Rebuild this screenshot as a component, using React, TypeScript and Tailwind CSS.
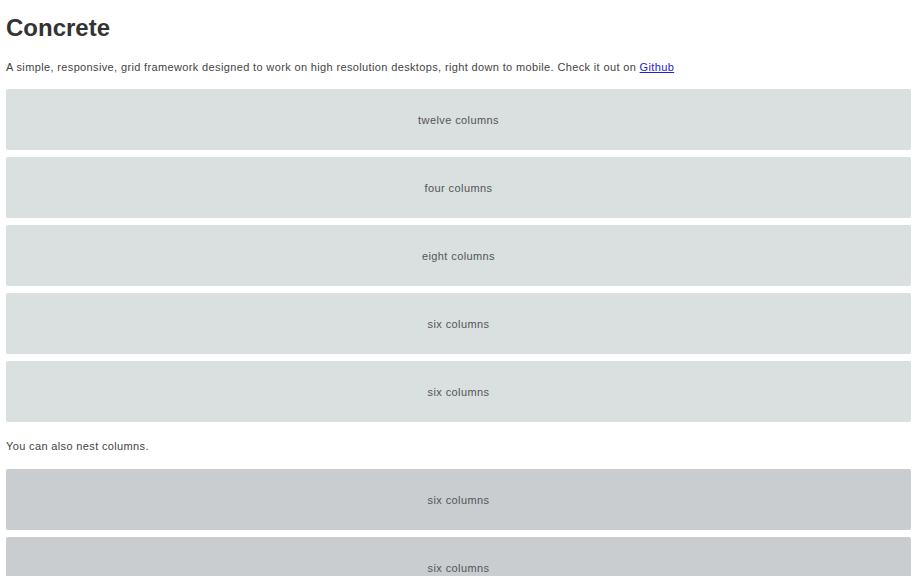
import React from "react";

const Box = ({ label, dark }: { label: string; dark?: boolean }) => (
  <div
    className={`h-[61px] rounded-[2px] flex items-center justify-center pt-[2px] text-[11px] tracking-[0.4px] text-[#555] ${dark ? "bg-[#c9cdcf]" : "bg-[#dadfe0]"}`}
  >
    {label}
  </div>
);

export default function App() {
  return (
    <div className="bg-white min-h-[576px] pl-[6px] pr-[5px] pt-[14px] font-['Liberation_Sans',Arial,sans-serif] text-[#333]">
      <h1 className="text-[24px] leading-[28px] font-bold text-[#333]">Concrete</h1>
      <p className="mt-[18px] text-[11px] leading-[14px] tracking-[0.36px] text-[#444]">
        A simple, responsive, grid framework designed to work on high resolution desktops, right down to mobile. Check it out on{" "}
        <a href="#" className="text-[#2222cc] underline">Github</a>
      </p>
      <div className="mt-[15px] flex flex-col gap-[7px]">
        <Box label="twelve columns" />
        <Box label="four columns" />
        <Box label="eight columns" />
        <Box label="six columns" />
        <Box label="six columns" />
      </div>
      <p className="mt-[17px] text-[11px] leading-[14px] tracking-[0.36px] text-[#444]">You can also nest columns.</p>
      <div className="mt-[16px] flex flex-col gap-[7px]">
        <Box label="six columns" dark />
        <Box label="six columns" dark />
      </div>
    </div>
  );
}
